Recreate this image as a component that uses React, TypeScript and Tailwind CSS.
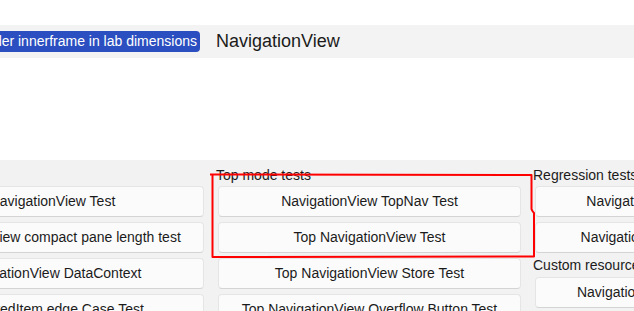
import React from 'react'

const font = { fontFamily: '"Liberation Sans", Arial, sans-serif' }

type Column = { label?: string; items: (string | { label: string })[] }

const COLUMNS: Column[] = [
  {
    items: [
      'NavigationView Test',
      'NavigationView compact pane length test',
      'NavigationView DataContext',
      'SelectedItem edge Case Test',
    ],
  },
  {
    label: 'Top mode tests',
    items: [
      'NavigationView TopNav Test',
      'Top NavigationView Test',
      'Top NavigationView Store Test',
      'Top NavigationView Overflow Button Test',
    ],
  },
  {
    label: 'Regression tests',
    items: [
      'NavigationView Regression Test',
      'NavigationView Regression Test 2',
      { label: 'Custom resources' },
      'NavigationView Custom Resources',
    ],
  },
]

function TestButton({ text }: { text: string }) {
  return (
    <div className="h-[31px] w-[303px] shrink-0 flex items-center justify-center whitespace-nowrap rounded-[4px] border border-[#e5e5e5] border-b-[#d4d4d4] bg-[#fbfbfb] text-[14px] text-[#1b1b1b]">
      {text}
    </div>
  )
}

function Label({ text }: { text: string }) {
  return <div className="h-[20px] -ml-[2px] whitespace-nowrap text-[14px] leading-[20px] text-[#1b1b1b]">{text}</div>
}

export default function App() {
  return (
    <div className="relative h-[311px] w-[634px] overflow-hidden bg-white" style={font}>
      {/* header bar */}
      <div className="mt-[25px] flex h-[33px] items-center bg-[#f3f3f3]">
        <div className="flex w-[200px] shrink-0 justify-end overflow-hidden">
          <div className="flex h-[21px] shrink-0 items-center whitespace-nowrap rounded-[4px] bg-[#2b4fc0] pl-[10px] pr-[3px] text-[14px] text-white">
            Render innerframe in lab dimensions
          </div>
        </div>
        <div className="ml-[16px] text-[18px] text-[#1b1b1b]">NavigationView</div>
      </div>

      <div className="h-[102px]" />

      {/* test groups */}
      <div className="h-[151px] bg-[#f2f2f2] pt-[5px]">
        <div className="-ml-[99px] flex gap-[14px]">
          {COLUMNS.map((col, ci) => (
            <div key={ci} className="flex w-[303px] shrink-0 flex-col">
              <div className="mb-[1px]">{col.label ? <Label text={col.label} /> : <div className="h-[20px]" />}</div>
              <div className="flex flex-col gap-[5px]">
                {col.items.map((it, i) =>
                  typeof it === 'string' ? (
                    <TestButton key={i} text={it} />
                  ) : (
                    <div key={i} className="-mb-[3px] -mt-[3px]">
                      <Label text={it.label} />
                    </div>
                  )
                )}
              </div>
            </div>
          ))}
        </div>
      </div>

      {/* red annotation */}
      <svg className="pointer-events-none absolute left-0 top-0" width="634" height="311" viewBox="0 0 634 311">
        <path
          d="M210 174.5 L531.5 175 L531.5 209 Q532 211 534 213 L534 256.5 L212.5 257 L212.5 174.5"
          fill="none"
          stroke="#ff0000"
          strokeWidth="2"
          strokeLinejoin="round"
        />
      </svg>
    </div>
  )
}
